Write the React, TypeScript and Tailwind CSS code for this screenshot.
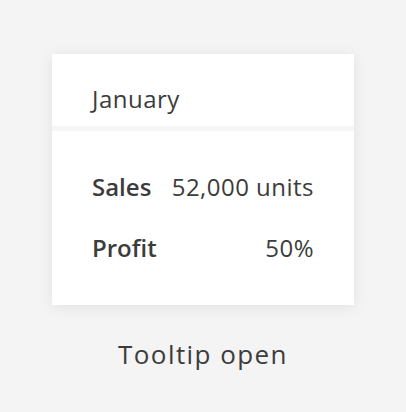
export default function App() {
  return (
    <div className="min-h-[412px] w-full bg-[#f4f4f4] flex flex-col items-center pt-[54px] font-['Open_Sans',sans-serif] text-[#3c3c3c]">
      <div className="w-[302px] bg-white shadow-[0_2px_14px_rgba(0,0,0,0.08)]">
        <div className="h-[72px] px-10 pt-[29px]">
          <span className="block text-[24px] leading-[32px] tracking-[0.02em]">January</span>
        </div>
        <div className="h-[5px] bg-[#f6f6f6]" />
        <div className="px-10 pt-[40px] pb-[41px] flex flex-col gap-[29px]">
          <div className="flex items-center justify-between text-[24px] leading-[32px]">
            <span className="font-semibold">Sales</span>
            <span className="tracking-[0.02em]">52,000 units</span>
          </div>
          <div className="flex items-center justify-between text-[24px] leading-[32px]">
            <span className="font-semibold">Profit</span>
            <span className="tracking-[0.02em]">50%</span>
          </div>
        </div>
      </div>
      <div className="mt-[33px] text-[26px] leading-[32px] tracking-[0.055em]">Tooltip open</div>
    </div>
  );
}
